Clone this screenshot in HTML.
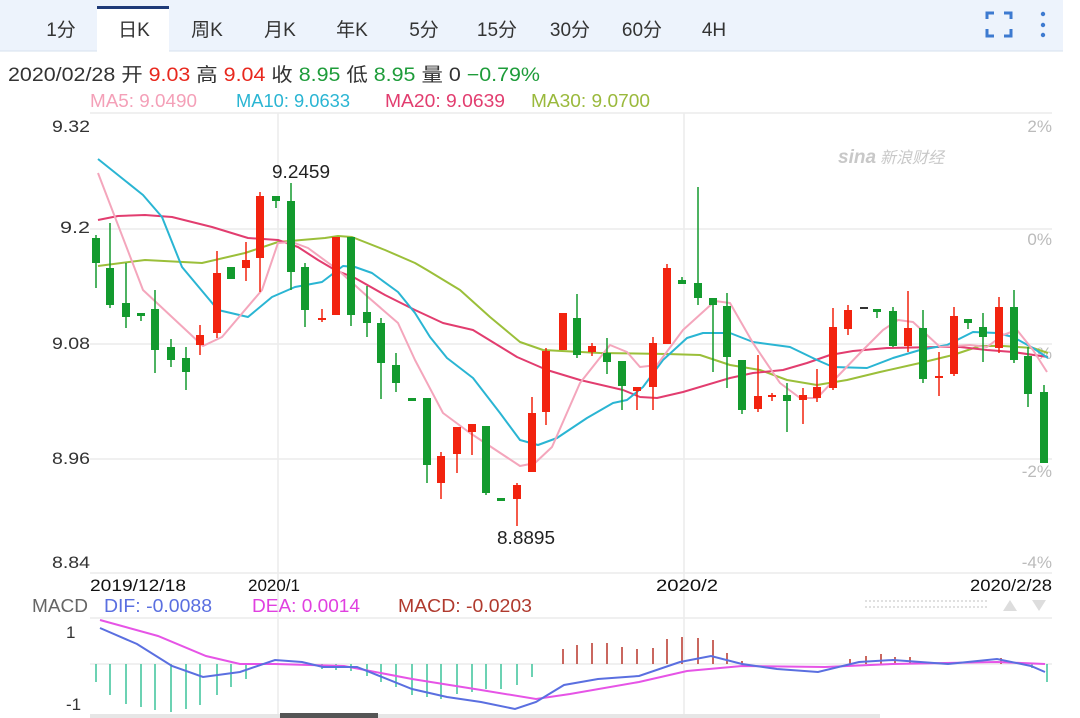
<!DOCTYPE html>
<html><head><meta charset="utf-8"><style>
html,body{margin:0;padding:0;background:#fff;width:1080px;height:718px;overflow:hidden;font-family:"Liberation Sans","Noto Sans CJK SC",sans-serif}
</style></head><body>
<svg width="1080" height="718" viewBox="0 0 1080 718" xmlns="http://www.w3.org/2000/svg" style="position:absolute;left:0;top:0;font-family:'Liberation Sans','Noto Sans CJK SC',sans-serif">
<rect x="0" y="0" width="1063" height="51" fill="#edf3fc"/>
<line x1="0" y1="51" x2="1063" y2="51" stroke="#d6e0ee"/>
<rect x="97" y="7" width="72" height="45" fill="#fff"/>
<rect x="97" y="6" width="72" height="3" fill="#1e3a78"/>
<g font-size="19" fill="#333" text-anchor="middle">
<text x="61" y="36">1分</text><text x="134" y="36">日K</text><text x="207" y="36">周K</text><text x="280" y="36">月K</text><text x="352" y="36">年K</text><text x="424" y="36">5分</text><text x="497" y="36">15分</text><text x="570" y="36">30分</text><text x="642" y="36">60分</text><text x="714" y="36">4H</text>
</g>
<g stroke="#3d7ad0" stroke-width="3" fill="none">
<path d="M987 19V13H994M1004 13H1011V19M987 29V36H994M1004 36H1011V29"/>
</g>
<g fill="#3d7ad0"><circle cx="1043" cy="14" r="2.2"/><circle cx="1043" cy="25" r="2.2"/><circle cx="1043" cy="35" r="2.2"/></g>
<text x="8" y="81" font-size="19" fill="#333" textLength="532" lengthAdjust="spacingAndGlyphs">2020/02/28 开 <tspan fill="#e8281e">9.03</tspan> 高 <tspan fill="#e8281e">9.04</tspan> 收 <tspan fill="#1e9c3a">8.95</tspan> 低 <tspan fill="#1e9c3a">8.95</tspan> 量 0 <tspan fill="#1e9c3a">−0.79%</tspan></text>
<g font-size="18">
<text x="90" y="107" fill="#f4a0b8" textLength="107" lengthAdjust="spacingAndGlyphs">MA5: 9.0490</text>
<text x="236" y="107" fill="#2ab5d3" textLength="114" lengthAdjust="spacingAndGlyphs">MA10: 9.0633</text>
<text x="385" y="107" fill="#e23d6f" textLength="120" lengthAdjust="spacingAndGlyphs">MA20: 9.0639</text>
<text x="531" y="107" fill="#9ab93c" textLength="119" lengthAdjust="spacingAndGlyphs">MA30: 9.0700</text>
</g>
<g stroke="#ececec" stroke-width="1.5">
<line x1="90" y1="113" x2="1052" y2="113"/><line x1="90" y1="229" x2="1052" y2="229"/><line x1="90" y1="344" x2="1052" y2="344"/><line x1="90" y1="459" x2="1052" y2="459"/><line x1="90" y1="573" x2="1052" y2="573"/>
<line x1="278" y1="113" x2="278" y2="718"/><line x1="684" y1="113" x2="684" y2="718"/>
<line x1="90" y1="618" x2="1052" y2="618"/><line x1="90" y1="664" x2="1052" y2="664"/>
</g>
<g font-size="17" fill="#333">
<text x="52" y="132" textLength="38" lengthAdjust="spacingAndGlyphs">9.32</text><text x="60" y="233" textLength="30" lengthAdjust="spacingAndGlyphs">9.2</text><text x="52" y="349" textLength="38" lengthAdjust="spacingAndGlyphs">9.08</text><text x="52" y="464" textLength="38" lengthAdjust="spacingAndGlyphs">8.96</text><text x="52" y="568" textLength="38" lengthAdjust="spacingAndGlyphs">8.84</text>
</g>
<g font-size="17" fill="#bbb" text-anchor="end">
<text x="1052" y="132">2%</text><text x="1052" y="245">0%</text><text x="1052" y="359">%</text><text x="1052" y="477">-2%</text><text x="1052" y="568">-4%</text>
</g>
<text x="838" y="163" font-size="19" font-style="italic" font-weight="bold" fill="#c8c8c8">sina</text>
<text x="880" y="163" font-size="16" font-style="italic" fill="#c8c8c8">新浪财经</text>
<g fill="none" stroke-width="2" stroke-linejoin="round">
<polyline stroke="#9bbf3a" points="98,266 145,260 202,263 245,253 278,242 325,238 338,236 352,237 385,250 415,263 427,270 460,290 490,317 520,342 543,350 600,353 667,354 700,355 730,365 760,370 787,380 817,385 847,380 880,372 920,363 953,355 980,346 1003,346 1033,348 1048,353"/>
<polyline stroke="#e23d6f" points="98,220 118,216 145,215 172,217 212,227 248,238 278,240 298,247 318,260 335,270 355,278 385,295 415,310 443,323 473,330 517,357 547,370 580,380 623,390 640,397 657,398 683,392 730,378 753,373 783,370 807,363 830,355 853,351 887,348 937,347 960,347 987,350 1013,352 1048,357"/>
<polyline stroke="#2ab5d3" points="98,159 143,195 162,217 182,267 218,310 248,317 272,297 295,287 322,282 343,266 355,267 372,273 398,292 415,313 430,337 447,358 473,378 500,413 520,440 538,445 557,438 587,418 613,403 627,400 643,387 663,360 687,338 703,333 730,333 753,342 790,347 817,360 833,367 867,368 893,358 920,350 947,345 973,332 997,333 1013,337 1033,348 1048,358"/>
<polyline stroke="#f4a6bc" points="98,173 143,290 203,346 222,337 262,290 278,243 292,242 308,248 338,270 368,297 398,323 415,360 443,413 470,433 520,466 535,463 552,447 580,383 610,345 627,352 640,367 657,365 683,330 715,301 730,303 753,343 780,383 800,398 817,398 837,377 863,350 883,330 898,320 913,322 940,347 970,345 987,347 1003,335 1017,330 1033,350 1047,372"/>
</g>
<path fill="none" stroke="#139a2e" stroke-width="1.5" d="M96 235V288M110 223V308M126 263V328M141 313V321M155 290V373M171 339V367M186 347V390M276 196V208M291 183V290M305 263V327M351 237V326M367 286V337M381 318V399M396 353V392M427 398V483M486 426V495M577 294V358M607 338V374M622 361V410M682 277V284M698 187V305M713 298V372M727 293V388M742 360V414M787 383V432M877 309V318M893 307V347M923 310V383M968 319V329M983 313V362M1014 290V363M1028 347V407M1044 385V463"/>
<path fill="none" stroke="#139a2e" stroke-width="8" d="M96 238V263M110 268V305M126 303V317M141 313V316M155 309V350M171 347V360M186 358V372M231 267V279M276 196V201M291 201V272M305 267V310M351 237V315M367 312V323M381 323V363M396 365V383M412 398V401M427 398V465M486 426V493M501 498V501M577 318V355M607 353V362M622 361V386M682 280V284M698 283V298M713 298V305M727 306V357M742 360V410M787 395V401M877 309V312M893 311V346M923 328V379M968 319V323M983 327V337M1014 307V360M1028 356V394M1044 392V463"/>
<path fill="none" stroke="#f2230f" stroke-width="1.5" d="M200 325V355M217 251V338M246 242V281M260 192V292M322 309V322M441 452V499M457 427V473M472 424V455M517 483V526M532 397V472M546 348V425M592 343V356M637 387V410M653 337V410M667 264V344M758 355V412M772 393V401M803 388V424M817 369V402M833 308V390M848 305V335M908 291V352M939 352V396M954 307V376M999 297V353"/>
<path fill="none" stroke="#f2230f" stroke-width="8" d="M200 335V345M217 273V333M246 260V268M260 196V258M322 318V320M336 237V315M441 456V483M457 427V454M472 424V432M517 485V499M532 413V472M546 351V412M563 313V350M592 346V352M637 387V391M653 343V387M667 268V344M758 396V409M772 395V397M803 395V400M817 387V398M833 327V388M848 310V329M908 328V346M939 376V378M954 316V374M999 307V348"/>
<path stroke="#333" stroke-width="8" d="M864 307V309"/>
<g font-size="18" fill="#222">
<text x="272" y="178" textLength="58" lengthAdjust="spacingAndGlyphs">9.2459</text>
<text x="497" y="544" textLength="58" lengthAdjust="spacingAndGlyphs">8.8895</text>
</g>
<g font-size="17" fill="#111">
<text x="90" y="591" textLength="96" lengthAdjust="spacingAndGlyphs">2019/12/18</text><text x="248" y="591">2020/1</text><text x="656" y="591" textLength="62" lengthAdjust="spacingAndGlyphs">2020/2</text><text x="970" y="591" textLength="82" lengthAdjust="spacingAndGlyphs">2020/2/28</text>
</g>
<g font-size="18">
<text x="32" y="612" fill="#666" textLength="56" lengthAdjust="spacingAndGlyphs">MACD</text>
<text x="104" y="612" fill="#5a6fe0" textLength="108" lengthAdjust="spacingAndGlyphs">DIF: -0.0088</text>
<text x="252" y="612" fill="#e040e0" textLength="108" lengthAdjust="spacingAndGlyphs">DEA: 0.0014</text>
<text x="398" y="612" fill="#b03a2e" textLength="134" lengthAdjust="spacingAndGlyphs">MACD: -0.0203</text>
</g>
<g stroke="#e0e0e0" stroke-width="2" stroke-dasharray="2,2"><line x1="865" y1="601" x2="988" y2="601"/><line x1="865" y1="607" x2="988" y2="607"/></g>
<path d="M1003 611L1010 600L1017 611Z" fill="#ddd"/><path d="M1032 600L1046 600L1039 611Z" fill="#ddd"/>
<g font-size="17" fill="#333"><text x="66" y="638">1</text><text x="66" y="710">-1</text></g>
<path fill="none" stroke="#3cc49a" stroke-width="1.5" d="M96 664V682M110 664V695M126 664V704M141 664V707M155 664V710M171 664V712M186 664V709M200 664V705M217 664V695M231 664V687M246 664V679M322 664V669M336 664V670M351 664V671M367 664V676M381 664V682M396 664V687M412 664V695M427 664V697M441 664V699M457 664V694M472 664V692M486 664V689M501 664V689M517 664V685M532 664V677M1032 664V668M1047 664V682"/>
<path fill="none" stroke="#b8352a" stroke-width="1.5" d="M563 664V649M577 664V645M592 664V643M607 664V643M622 664V647M637 664V649M653 664V648M667 664V639M682 664V637M698 664V638M713 664V640M727 664V653M742 664V661M850 664V659M866 664V656M881 664V654M895 664V657M910 664V657M1001 664V658"/>
<g fill="none" stroke-width="2">
<polyline stroke="#e654e6" points="100,620 158,636 206,656 240,664 275,664 344,666 412,679 481,690 536,699 570,694 639,682 687,671 742,666 825,667 893,664 997,662 1045,664"/>
<polyline stroke="#5a6fe0" points="100,628 137,644 172,666 203,677 240,672 275,660 302,662 323,667 357,667 412,689 447,697 481,702 515,709 536,702 564,685 598,679 639,676 680,662 711,656 742,664 777,669 818,672 859,662 893,660 948,664 997,659 1031,666 1045,672"/>
</g>
<rect x="90" y="714" width="790" height="4" fill="#e6e6e6"/>
<rect x="280" y="713" width="98" height="5" fill="#555"/>
</svg>
</body></html>
